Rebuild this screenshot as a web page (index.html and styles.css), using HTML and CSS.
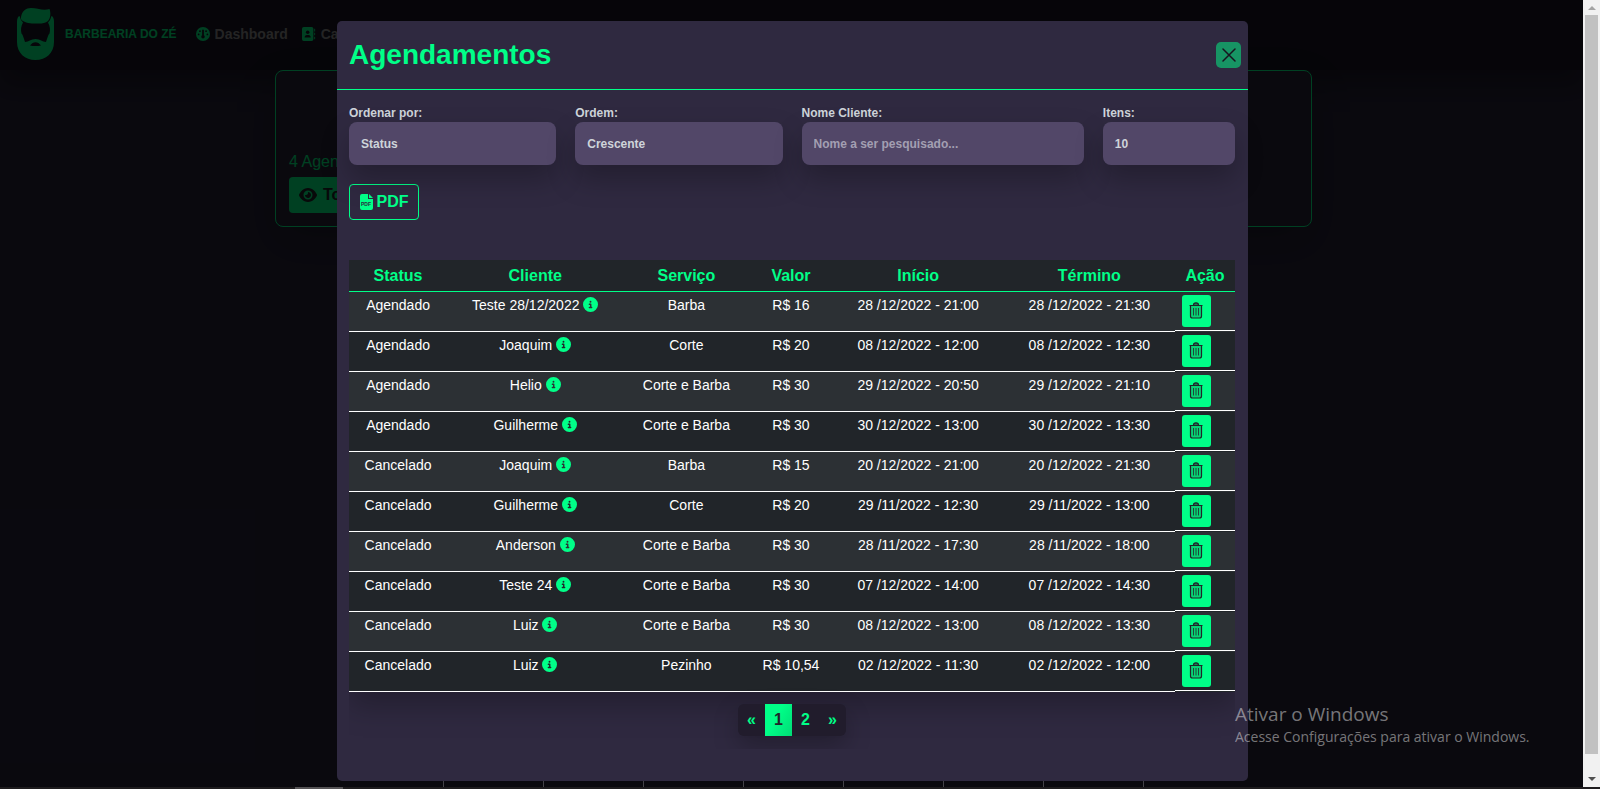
FILE: index.html
```html
<!DOCTYPE html>
<html lang="pt-BR">
<head>
<meta charset="utf-8">
<title>Barbearia do Zé</title>
<link rel="stylesheet" href="styles.css">
</head>
<body>
<svg class="sprite" aria-hidden="true">
  <symbol id="info" viewBox="0 0 512 512"><path d="M256 512A256 256 0 1 0 256 0a256 256 0 1 0 0 512zM216 336h24V272H216c-13.300 0-24-10.700-24-24s10.700-24 24-24h48c13.300 0 24 10.700 24 24v88h8c13.300 0 24 10.700 24 24s-10.700 24-24 24H216c-13.300 0-24-10.700-24-24s10.700-24 24-24zm40-208a32 32 0 1 1 0 64 32 32 0 1 1 0-64z"/></symbol>
  <symbol id="trash" viewBox="0 0 14 17"><path d="M4.500 3C4.500 1.300 5.500.8 7 .8S9.500 1.300 9.500 3z" fill="#212529" fill-opacity=".55"/><path d="M2 3.500h10V14a2 2 0 0 1-2 2H4a2 2 0 0 1-2-2z" fill="#212529" fill-opacity=".2"/><path d="M.5 3.500h13M1.500 3.500V14a2 2 0 0 0 2 2h7a2 2 0 0 0 2-2V3.500M4.500 3C4.500 1.300 5.500.8 7 .8S9.500 1.300 9.500 3" fill="none" stroke="#212529" stroke-width="1.200"/><path d="M4.500 6v7.500M7 6v7.500M9.500 6v7.500" stroke="#212529" stroke-width=".8"/></symbol>
</svg>
<div class="screen">
  <div class="viewport">
    <div class="page">
      <nav class="navbar">
        <a class="brand" href="#">
          <svg class="logo" viewBox="0 0 37 52"><path d="M4 9C5 3 9 0 14 0c6 0 12 3 18.500 1 1.500 4 1 9-1.500 12-3 3-8 2.500-12.500 2.500S8 15 4.500 12c-.5-1-.8-2-.5-3z"/><path d="M2 8c1 0 1 2 2 4l2 2.500C4 18 3.500 22 4.500 25.500c1.500 1.500 2 4 3.500 8.500 4 0 5.500-3 10.500-3s6.500 3 10.500 3c1.500-4.500 2-7 3.500-8.500 1-3.500.5-7.500-1.500-11l2-2.500c1-2 1-4 2-4 2 2 2 4 2 7v19c0 11-8 18-18.500 18S0 45 0 34V15c0-3 0-5 2-7zM13 37.500c3.500.8 7.500.8 11 0-3-4.500-8-4.500-11 0z" fill-rule="evenodd"/></svg>
          <span>BARBEARIA DO ZÉ</span>
        </a>
        <a class="nav-link" href="#">
          <svg class="nav-icon" viewBox="0 0 16 16"><circle cx="8" cy="8" r="8"/><path class="line" d="M8 3v7"/><circle class="hole" cx="8" cy="11" r="2"/><circle class="hole" cx="4.500" cy="4.800" r="1"/><circle class="hole" cx="11.500" cy="4.800" r="1"/><circle class="hole" cx="3" cy="8.500" r="1"/><circle class="hole" cx="13" cy="8.500" r="1"/></svg>
          Dashboard
        </a>
        <a class="nav-link" href="#">
          <svg class="nav-icon" viewBox="0 0 16 16"><path d="M2 0h9a2 2 0 0 1 2 2v12a2 2 0 0 1-2 2H2a2 2 0 0 1-2-2V2a2 2 0 0 1 2-2zM14 2h1v3h-1zM14 6.500h1v3h-1zM14 11h1v3h-1z"/><circle class="hole" cx="6.500" cy="6" r="2"/><path class="hole" d="M3 12c0-2 1-3 2.500-3h2C9 9 10 10 10 12z"/></svg>
          Cad
        </a>
      </nav>
      <main class="content">
        <section class="summary">
          <p class="summary-text">4 Agendamentos</p>
          <button class="summary-button" type="button"><svg class="eye" viewBox="0 0 576 512"><path d="M288 32c-80.800 0-145.500 36.800-192.600 80.600C48.600 156 17.300 208 2.500 243.700c-3.300 7.900-3.300 16.700 0 24.600C17.300 304 48.600 356 95.400 399.400C142.500 443.200 207.200 480 288 480s145.500-36.800 192.600-80.600c46.800-43.500 78.100-95.400 93-131.100c3.300-7.900 3.300-16.700 0-24.600c-14.900-35.700-46.200-87.700-93-131.100C433.500 68.800 368.800 32 288 32zM144 256a144 144 0 1 1 288 0 144 144 0 1 1 -288 0zm144-64c0 35.300-28.700 64-64 64c-7.100 0-13.900-1.200-20.300-3.300c-5.500-1.800-11.900 1.600-11.700 7.400c.3 6.900 1.300 13.800 3.200 20.700c13.700 51.200 66.400 81.600 117.600 67.900s81.600-66.400 67.900-117.600c-11.100-41.500-47.800-69.400-88.600-71.100c-5.800-.2-9.200 6.100-7.400 11.700c2.100 6.400 3.300 13.200 3.300 20.300z"/></svg>Todos</button>
        </section>
      </main>
    </div>
    <div class="backdrop">
      <div class="ticks"></div>
      <div class="modal" role="dialog" aria-labelledby="title">
        <header class="modal-header">
          <h1 id="title">Agendamentos</h1>
          <button class="close" type="button" aria-label="Fechar"><svg viewBox="0 0 14 14"><path d="M1 1l12 12M13 1L1 13"/></svg></button>
        </header>
        <div class="modal-body">
          <form class="filters">
            <div class="field"><label for="sort">Ordenar por:</label><select id="sort"><option>Status</option></select></div>
            <div class="field"><label for="order">Ordem:</label><select id="order"><option>Crescente</option></select></div>
            <div class="field"><label for="name">Nome Cliente:</label><input id="name" type="text" placeholder="Nome a ser pesquisado..."></div>
            <div class="field"><label for="items">Itens:</label><select id="items"><option>10</option></select></div>
          </form>
          <button class="pdf" type="button"><svg viewBox="0 0 13 16"><path d="M2 0h6v5h5v9a2 2 0 0 1-2 2H2a2 2 0 0 1-2-2V2a2 2 0 0 1 2-2zM9 0l4 4H9z"/><text x="1" y="12">PDF</text></svg>PDF</button>
          <div class="results">
            <table>
              <colgroup><col class="c-status"><col class="c-client"><col class="c-service"><col class="c-value"><col class="c-date"><col class="c-date"><col class="c-action"></colgroup>
              <thead><tr><th>Status</th><th>Cliente</th><th>Serviço</th><th>Valor</th><th>Início</th><th>Término</th><th>Ação</th></tr></thead>
              <tbody>
                <tr><td>Agendado</td><td>Teste 28/12/2022 <svg class="info"><use href="#info"/></svg></td><td>Barba</td><td>R$ 16</td><td>28 /12/2022 - 21:00</td><td>28 /12/2022 - 21:30</td><td class="action"><button type="button" aria-label="Excluir"><svg><use href="#trash"/></svg></button></td></tr>
                <tr><td>Agendado</td><td>Joaquim <svg class="info"><use href="#info"/></svg></td><td>Corte</td><td>R$ 20</td><td>08 /12/2022 - 12:00</td><td>08 /12/2022 - 12:30</td><td class="action"><button type="button" aria-label="Excluir"><svg><use href="#trash"/></svg></button></td></tr>
                <tr><td>Agendado</td><td>Helio <svg class="info"><use href="#info"/></svg></td><td>Corte e Barba</td><td>R$ 30</td><td>29 /12/2022 - 20:50</td><td>29 /12/2022 - 21:10</td><td class="action"><button type="button" aria-label="Excluir"><svg><use href="#trash"/></svg></button></td></tr>
                <tr><td>Agendado</td><td>Guilherme <svg class="info"><use href="#info"/></svg></td><td>Corte e Barba</td><td>R$ 30</td><td>30 /12/2022 - 13:00</td><td>30 /12/2022 - 13:30</td><td class="action"><button type="button" aria-label="Excluir"><svg><use href="#trash"/></svg></button></td></tr>
                <tr><td>Cancelado</td><td>Joaquim <svg class="info"><use href="#info"/></svg></td><td>Barba</td><td>R$ 15</td><td>20 /12/2022 - 21:00</td><td>20 /12/2022 - 21:30</td><td class="action"><button type="button" aria-label="Excluir"><svg><use href="#trash"/></svg></button></td></tr>
                <tr><td>Cancelado</td><td>Guilherme <svg class="info"><use href="#info"/></svg></td><td>Corte</td><td>R$ 20</td><td>29 /11/2022 - 12:30</td><td>29 /11/2022 - 13:00</td><td class="action"><button type="button" aria-label="Excluir"><svg><use href="#trash"/></svg></button></td></tr>
                <tr><td>Cancelado</td><td>Anderson <svg class="info"><use href="#info"/></svg></td><td>Corte e Barba</td><td>R$ 30</td><td>28 /11/2022 - 17:30</td><td>28 /11/2022 - 18:00</td><td class="action"><button type="button" aria-label="Excluir"><svg><use href="#trash"/></svg></button></td></tr>
                <tr><td>Cancelado</td><td>Teste 24 <svg class="info"><use href="#info"/></svg></td><td>Corte e Barba</td><td>R$ 30</td><td>07 /12/2022 - 14:00</td><td>07 /12/2022 - 14:30</td><td class="action"><button type="button" aria-label="Excluir"><svg><use href="#trash"/></svg></button></td></tr>
                <tr><td>Cancelado</td><td>Luiz <svg class="info"><use href="#info"/></svg></td><td>Corte e Barba</td><td>R$ 30</td><td>08 /12/2022 - 13:00</td><td>08 /12/2022 - 13:30</td><td class="action"><button type="button" aria-label="Excluir"><svg><use href="#trash"/></svg></button></td></tr>
                <tr><td>Cancelado</td><td>Luiz <svg class="info"><use href="#info"/></svg></td><td>Pezinho</td><td>R$ 10,54</td><td>02 /12/2022 - 11:30</td><td>02 /12/2022 - 12:00</td><td class="action"><button type="button" aria-label="Excluir"><svg><use href="#trash"/></svg></button></td></tr>
              </tbody>
            </table>
            <nav class="pagination" aria-label="Paginação"><a href="#">«</a><a class="current" href="#">1</a><a href="#">2</a><a href="#">»</a></nav>
          </div>
        </div>
      </div>
    </div>
    <div class="watermark"><p class="wm-title">Ativar o Windows</p><p class="wm-text">Acesse Configurações para ativar o Windows.</p></div>
  </div>
  <div class="scrollbar"><span class="arrow up"></span><span class="thumb"></span><span class="arrow down"></span></div>
  <div class="taskbar"></div>
</div>
</body>
</html>
```
FILE: styles.css
```css
* { box-sizing: border-box; }
body { margin: 0; font-family: "Liberation Sans", Arial, sans-serif; font-size: 14px; }
h1, p { margin: 0; }
a { text-decoration: none; color: inherit; }
button, input, select { font-family: inherit; margin: 0; }
.sprite { position: absolute; width: 0; height: 0; }

.screen { display: grid; grid-template-columns: 1fr 17px; grid-template-rows: 1fr 2px; height: 100vh; min-height: 640px; overflow: hidden; }
.viewport { position: relative; overflow: hidden; background: #29253b; }
.taskbar { grid-column: 1 / -1; background: linear-gradient(90deg, transparent 295px, #555355 295px, #555355 343px, transparent 343px), #1e1c1e; }

.scrollbar { display: flex; flex-direction: column; align-items: center; background: #f1f1f1; }
.thumb { flex: 1; width: 13px; background: #c1c1c1; }
.arrow { display: flex; align-items: center; justify-content: center; height: 15px; }
.arrow::before { content: ""; border: 4px solid transparent; border-top-width: 0; border-bottom-color: #a3a3a3; }
.arrow.down { height: 33px; padding-top: 16px; }
.arrow.down::before { border-top: 4px solid #505050; border-bottom-width: 0; }

.navbar { display: flex; align-items: center; gap: 19px; height: 70px; padding: 0 17px 2px; background: #181624; box-shadow: 0 16px 24px rgba(0, 0, 0, .3); }
.brand { display: flex; align-items: center; gap: 11px; font-size: 12px; font-weight: bold; color: #00ff88; }
.logo { width: 37px; height: 52px; fill: #00ff88; }
.hole { fill: #181624; }
.line { stroke: #181624; stroke-width: 2; }
.nav-link { display: flex; align-items: center; gap: 5px; margin-right: -5px; font-weight: bold; color: #909090; }
.nav-icon { width: 14px; height: 14px; fill: #00ff88; }

.content { padding-left: 4px; }
.summary { display: flex; flex-direction: column; align-items: flex-start; justify-content: flex-end; gap: 6px; max-width: 1037px; min-height: 157px; margin: 0 auto; padding: 13px; border: 1px solid #00ff88; border-radius: 8px; background: #29253b; box-shadow: 0 16px 40px rgba(0, 0, 0, .2); position: relative; }
.summary-text { font-size: 16px; line-height: 18px; color: #00ff88; }
.summary-button { display: flex; align-items: center; gap: 6px; height: 36px; padding: 0 10px; border: 0; border-radius: 4px; background: #00ff88; font-size: 16px; font-weight: bold; color: #212529; }
.eye { width: 18px; height: 16px; fill: #212529; }

.backdrop { position: absolute; inset: 0; padding: 21px 0 0 2px; background: rgba(0, 0, 0, .75); }
.ticks { position: absolute; left: 443px; bottom: 0; width: 701px; height: 6px; background: repeating-linear-gradient(90deg, #444348 0 1px, transparent 1px 100px); }
.modal { position: relative; max-width: 911px; margin: 0 auto; border-radius: 5px; background: #2f2940; }
.modal-header { display: flex; align-items: center; justify-content: space-between; height: 69px; padding: 0 7px 0 12px; border-bottom: 1px solid #00ff88; }
.modal-header h1 { font-size: 28px; line-height: 34px; color: #00ff88; padding-bottom: 1px; }
.close { display: grid; place-items: center; width: 25px; height: 26px; padding: 0; border: 0; border-radius: 5px; background: #00ff88; opacity: .5; }
.close svg { width: 14px; height: 14px; stroke: #000; stroke-width: 1.5; stroke-linecap: round; }
.modal-body { padding: 14px 13px 32px 12px; }

.filters { display: grid; grid-template-columns: 207fr 207fr 282fr 132fr; gap: 19px; }
.field { display: flex; flex-direction: column; min-width: 0; }
.field label { font-size: 12px; font-weight: bold; line-height: 18px; color: #ced4da; }
.field select, .field input { appearance: none; width: 100%; height: 43px; padding: 0 12px; border: 0; border-radius: 8px; background: #524768; box-shadow: 0 14px 28px rgba(0, 0, 0, .25); font-size: 12px; font-weight: bold; color: #ced4da; }
.field input::placeholder { color: #a39fb2; opacity: 1; }
.pdf { display: flex; align-items: center; justify-content: center; gap: 4px; width: 70px; height: 36px; margin: 19px 0 40px; padding: 0; border: 1px solid #00ff88; border-radius: 4px; background: transparent; font-size: 16px; font-weight: bold; color: #00ff88; }
.pdf svg { width: 13px; height: 16px; fill: #00ff88; }
.pdf text { font-size: 5px; font-weight: bold; fill: #2f2940; }

.results { overflow: hidden; padding-bottom: 13px; }
table { width: 100%; table-layout: fixed; border-collapse: separate; border-spacing: 0; background: #212529; color: #fff; text-align: center; box-shadow: 0 14px 28px rgba(0, 0, 0, .25); }
.c-status { width: 98px; }
.c-client { width: 176px; }
.c-service { width: 126px; }
.c-value { width: 83px; }
.c-date { width: 171px; }
.c-action { width: 60px; }
th { height: 32px; padding: 0; border-bottom: 1px solid #00ff88; font-size: 16px; color: #00ff88; }
tbody tr:nth-child(odd) { background: #2c3034; }
td { height: 40px; padding: 4px 0 0; border-bottom: 1px solid #fff; line-height: 19px; vertical-align: top; }
.info { width: 15px; height: 15px; fill: #00ff88; vertical-align: -2px; }
td.action { display: flex; height: 39px; padding: 3px 7px; }
.action button { display: grid; place-items: center; width: 29px; height: 32px; padding: 0 0 2px; border: 0; border-radius: 3px; background: #00ff88; }
.action svg { width: 14px; height: 17px; }

.pagination { display: flex; width: max-content; margin: 12px auto 0; border-radius: 6px; overflow: hidden; background: #211c2c; color: #00ff88; font-size: 16px; font-weight: bold; box-shadow: 0 10px 24px rgba(0, 0, 0, .25); }
.pagination a { width: 27px; line-height: 32px; text-align: center; }
.pagination .current { background: linear-gradient(120deg, #00ff88 40%, #00dc76); color: #212529; }

.watermark { position: absolute; right: 48px; bottom: 40px; width: 300px; font-family: "Open Sans", "Noto Sans", sans-serif; color: rgba(255, 255, 255, .45); white-space: nowrap; }
.wm-title { font-size: 19px; line-height: 26px; }
.wm-text { font-size: 14px; line-height: 20px; }
```
